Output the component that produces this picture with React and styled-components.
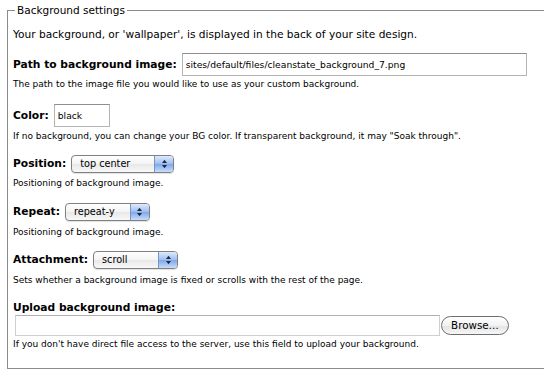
import React from 'react';
import styled, { createGlobalStyle } from 'styled-components';

const GlobalStyle = createGlobalStyle`
  html, body {
    margin: 0;
    padding: 0;
    background: #fff;
    overflow: hidden;
  }
  body {
    font-family: "DejaVu Sans", Verdana, sans-serif;
    color: #000;
  }
`;

const Fieldset = styled.fieldset`
  margin: 3px 0 0 7px;
  width: 560px;
  padding: 0 5px 18px;
  border: 1px solid #8c8c8c;
  box-sizing: border-box;
`;

const Legend = styled.legend`
  margin-left: 2px;
  padding: 0 2px;
  font-size: 10.5px;
  line-height: 14px;
`;

const Intro = styled.p`
  margin: 10px 0 0;
  font-size: 10.6px;
  line-height: 14px;
`;

const Item = styled.div`
  margin-top: ${(p) => p.$top}px;
`;

const Row = styled.div`
  display: flex;
  align-items: center;
  gap: 5px;
`;

const Label = styled.label`
  display: block;
  font-weight: bold;
  font-size: 10.7px;
  line-height: 14px;
`;

const TextInput = styled.div`
  box-sizing: border-box;
  width: ${(p) => p.$w}px;
  height: 23px;
  border: 1px solid #b4b4b4;
  border-top-color: #8e8e8e;
  padding: 0 3px;
  font-size: 9.2px;
  line-height: 21px;
  white-space: nowrap;
  overflow: hidden;
`;

const Description = styled.div`
  margin-top: ${(p) => p.$top}px;
  font-size: 9px;
  line-height: 12px;
`;

const Select = styled.div`
  box-sizing: border-box;
  width: ${(p) => p.$w}px;
  height: 18px;
  display: flex;
  border: 1px solid #808080;
  border-radius: 4px;
  overflow: hidden;
  background: linear-gradient(#ffffff, #f3f3f3 50%, #e8e8e8 51%, #f8f8f8);
  box-shadow: 0 1px 1px rgba(0, 0, 0, 0.12);
`;

const SelectText = styled.span`
  flex: 1;
  padding-left: 8px;
  font-size: 9.7px;
  line-height: 16px;
  white-space: nowrap;
`;

const SelectArrows = styled.span`
  width: 18px;
  border-left: 1px solid #7b93c4;
  background: linear-gradient(#dfeafb, #9dbdf0 50%, #7fa7ea 51%, #c7dcf9);
  display: flex;
  align-items: center;
  justify-content: center;
`;

const UploadRow = styled.div`
  display: flex;
  align-items: center;
  margin-left: 2px;
`;

const FileInput = styled.div`
  box-sizing: border-box;
  width: 425px;
  height: 21px;
  border: 1px solid #cfcfcf;
  border-top-color: #b0b0b0;
`;

const Browse = styled.button`
  margin-left: 1px;
  box-sizing: border-box;
  width: 68px;
  height: 19px;
  padding: 0;
  border: 1px solid #6e6e6e;
  border-radius: 10px;
  background: linear-gradient(#ffffff, #f2f2f2 50%, #e3e3e3 51%, #f7f7f7);
  font-family: "DejaVu Sans", Verdana, sans-serif;
  font-size: 10.3px;
  line-height: 17px;
  color: #000;
`;

const Arrows = () => (
  <svg width="7" height="10" viewBox="0 0 7 10">
    <path d="M3.5 0.8 L6 4 L1 4 Z" fill="#1b2a4a" />
    <path d="M1 6 L6 6 L3.5 9.2 Z" fill="#1b2a4a" />
  </svg>
);

const AquaSelect = ({ width, value }) => (
  <Select $w={width}>
    <SelectText>{value}</SelectText>
    <SelectArrows>
      <Arrows />
    </SelectArrows>
  </Select>
);

const App = () => (
  <>
    <GlobalStyle />
    <Fieldset>
      <Legend>Background settings</Legend>
      <Intro>Your background, or 'wallpaper', is displayed in the back of your site design.</Intro>

      <Item $top={12}>
        <Row>
          <Label>Path to background image:</Label>
          <TextInput $w={345}>sites/default/files/cleanstate_background_7.png</TextInput>
        </Row>
        <Description $top={2}>The path to the image file you would like to use as your custom background.</Description>
      </Item>

      <Item $top={14}>
        <Row>
          <Label>Color:</Label>
          <TextInput $w={56}>black</TextInput>
        </Row>
        <Description $top={3}>If no background, you can change your BG color. If transparent background, it may "Soak through".</Description>
      </Item>

      <Item $top={13}>
        <Row>
          <Label>Position:</Label>
          <AquaSelect width={103} value="top center" />
        </Row>
        <Description $top={4}>Positioning of background image.</Description>
      </Item>

      <Item $top={14}>
        <Row>
          <Label>Repeat:</Label>
          <AquaSelect width={85} value="repeat-y" />
        </Row>
        <Description $top={5}>Positioning of background image.</Description>
      </Item>

      <Item $top={13}>
        <Row>
          <Label>Attachment:</Label>
          <AquaSelect width={85} value="scroll" />
        </Row>
        <Description $top={5}>Sets whether a background image is fixed or scrolls with the rest of the page.</Description>
      </Item>

      <Item $top={15}>
        <Label>Upload background image:</Label>
        <UploadRow>
          <FileInput />
          <Browse type="button">Browse…</Browse>
        </UploadRow>
        <Description $top={2}>If you don't have direct file access to the server, use this field to upload your background.</Description>
      </Item>
    </Fieldset>
  </>
);

export default App;
